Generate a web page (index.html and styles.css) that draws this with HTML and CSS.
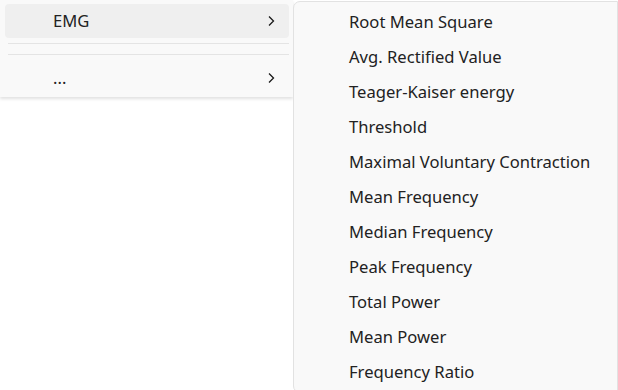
FILE: index.html
```html
<!DOCTYPE html>
<html>
<head>
<meta charset="utf-8">
<link rel="stylesheet" href="styles.css">
</head>
<body>
<div class="page">
  <div class="menu">
    <div class="item hover">
      <span class="label">EMG</span>
      <svg class="chev" width="10" height="12" viewBox="0 0 10 12"><path d="M3 1.5 L7.5 6 L3 10.5" fill="none" stroke="#1a1a1a" stroke-width="1.3"/></svg>
    </div>
    <div class="sep sep1"></div>
    <div class="sep sep2"></div>
    <div class="item">
      <span class="label">...</span>
      <svg class="chev" width="10" height="12" viewBox="0 0 10 12"><path d="M3 1.5 L7.5 6 L3 10.5" fill="none" stroke="#1a1a1a" stroke-width="1.3"/></svg>
    </div>
  </div>
  <div class="submenu">
    <div class="sub">Root Mean Square</div>
    <div class="sub">Avg. Rectified Value</div>
    <div class="sub">Teager-Kaiser energy</div>
    <div class="sub">Threshold</div>
    <div class="sub">Maximal Voluntary Contraction</div>
    <div class="sub">Mean Frequency</div>
    <div class="sub">Median Frequency</div>
    <div class="sub">Peak Frequency</div>
    <div class="sub">Total Power</div>
    <div class="sub">Mean Power</div>
    <div class="sub">Frequency Ratio</div>
  </div>
</div>
</body>
</html>
```
FILE: styles.css
```css
html, body {
  margin: 0;
  padding: 0;
  background: #ffffff;
}
body {
  font-family: "Noto Sans", "Open Sans", sans-serif;
  color: #222222;
  width: 618px;
  height: 390px;
  overflow: hidden;
}
.page {
  display: flex;
  align-items: flex-start;
}
.menu {
  width: 293px;
  height: 97px;
  background: #f9f9f9;
  box-shadow: 0 2px 3px rgba(0,0,0,0.12);
  padding-top: 4px;
  box-sizing: border-box;
  flex-shrink: 0;
}
.item {
  margin: 0 4px 0 5px;
  height: 34px;
  display: flex;
  align-items: center;
  border-radius: 4px;
}
.item.hover {
  background: #efefef;
}
.label {
  flex: 1;
  padding-left: 48px;
  font-size: 16.6px;
  line-height: 20px;
  margin-top: -1px;
}
.chev {
  margin-right: 13px;
  margin-top: -1px;
}
.sep {
  height: 1px;
  background: #e4e4e4;
  margin: 0 4px 0 8px;
}
.sep1 {
  margin-top: 5px;
}
.sep2 {
  margin-top: 10px;
  margin-bottom: 6px;
}
.submenu {
  flex: 1;
  height: 392px;
  margin-top: 1px;
  background: #f9f9f9;
  border: 1px solid #e2e2e2;
  border-radius: 7px 0 0 7px;
  padding-top: 2px;
  box-sizing: border-box;
}
.sub {
  height: 35px;
  display: flex;
  align-items: center;
  padding-left: 55px;
  font-size: 16.6px;
  line-height: 20px;
}
```
